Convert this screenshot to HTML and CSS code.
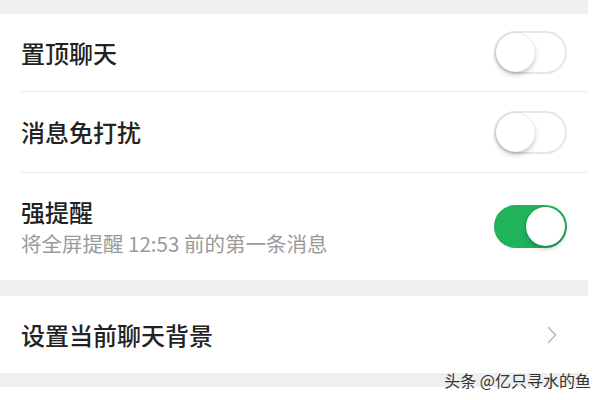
FILE: index.html
```html
<!DOCTYPE html>
<html lang="zh-CN">
<head>
    <meta charset="UTF-8">
    <meta name="viewport" content="width=device-width, initial-scale=1.0">
    <title>聊天设置</title>
    <link rel="stylesheet" href="styles.css">
</head>
<body>
    <div class="page">
        <div class="band band-top"></div>
        <div class="group">
            <div class="cell">
                <div class="cell-inner row-1">
                    <span class="title">置顶聊天</span>
                    <span class="switch"></span>
                </div>
            </div>
            <div class="cell">
                <div class="cell-inner row-2">
                    <span class="title">消息免打扰</span>
                    <span class="switch"></span>
                </div>
            </div>
            <div class="cell">
                <div class="cell-inner row-3 last">
                    <div class="text">
                        <div class="title">强提醒</div>
                        <div class="desc">将全屏提醒 12:53 前的第一条消息</div>
                    </div>
                    <span class="switch on"></span>
                </div>
            </div>
        </div>
        <div class="band band-mid"></div>
        <div class="group">
            <div class="cell">
                <div class="cell-inner row-4 last">
                    <span class="title">设置当前聊天背景</span>
                    <svg class="arrow" width="10" height="18" viewBox="0 0 10 18">
                        <polyline points="1.5,1.5 8.5,9 1.5,16.5" fill="none" stroke="#b8b8bd" stroke-width="1.6" stroke-linecap="round" stroke-linejoin="round"/>
                    </svg>
                </div>
            </div>
        </div>
        <div class="band band-bottom"></div>
    </div>
    <div class="watermark">头条 @亿只寻水的鱼</div>
</body>
</html>
```

FILE: styles.css
```css
body {
    margin: 0;
    background-color: #fff;
    font-family: "Noto Sans CJK SC", "Noto Sans", sans-serif;
    color: #222;
    position: relative;
    height: 400px;
    overflow: hidden;
}

.page {
    width: 588px;
}

.band {
    background-color: #efefef;
}

.band-top {
    height: 14px;
}

.band-mid {
    height: 16px;
}

.band-bottom {
    height: 14px;
}

.group {
    background-color: #fff;
}

.cell {
    padding-left: 21px;
}

.cell-inner {
    display: flex;
    align-items: center;
    justify-content: space-between;
    padding-right: 21px;
    border-bottom: 1px solid #ebebeb;
}

.cell-inner.last {
    border-bottom: none;
}

.row-1 {
    height: 77px;
}

.row-2 {
    height: 80px;
}

.row-3 {
    height: 107px;
}

.row-4 {
    height: 77px;
    padding-right: 31px;
}

.title {
    font-size: 24px;
    line-height: 30px;
    font-weight: 500;
}

.desc {
    margin-top: 2px;
    font-size: 20.5px;
    line-height: 28px;
    color: #9a9a9a;
}

.switch {
    position: relative;
    width: 73px;
    height: 43px;
    box-sizing: border-box;
    border-radius: 22px;
    border: 2px solid #e6e6e6;
    background-color: #fff;
    flex-shrink: 0;
}

.switch::after {
    content: "";
    position: absolute;
    top: 0;
    left: 0;
    width: 39px;
    height: 39px;
    border-radius: 50%;
    background-color: #fff;
    box-shadow: 0 3px 5px rgba(0, 0, 0, 0.22), 0 0 1px rgba(0, 0, 0, 0.2);
}

.switch.on {
    background-color: #1fb35a;
    border-color: #1fb35a;
}

.switch.on::after {
    left: auto;
    right: 0;
}

.watermark {
    position: absolute;
    top: 369px;
    right: 9px;
    font-size: 16px;
    line-height: 22px;
    color: #333;
}
```
